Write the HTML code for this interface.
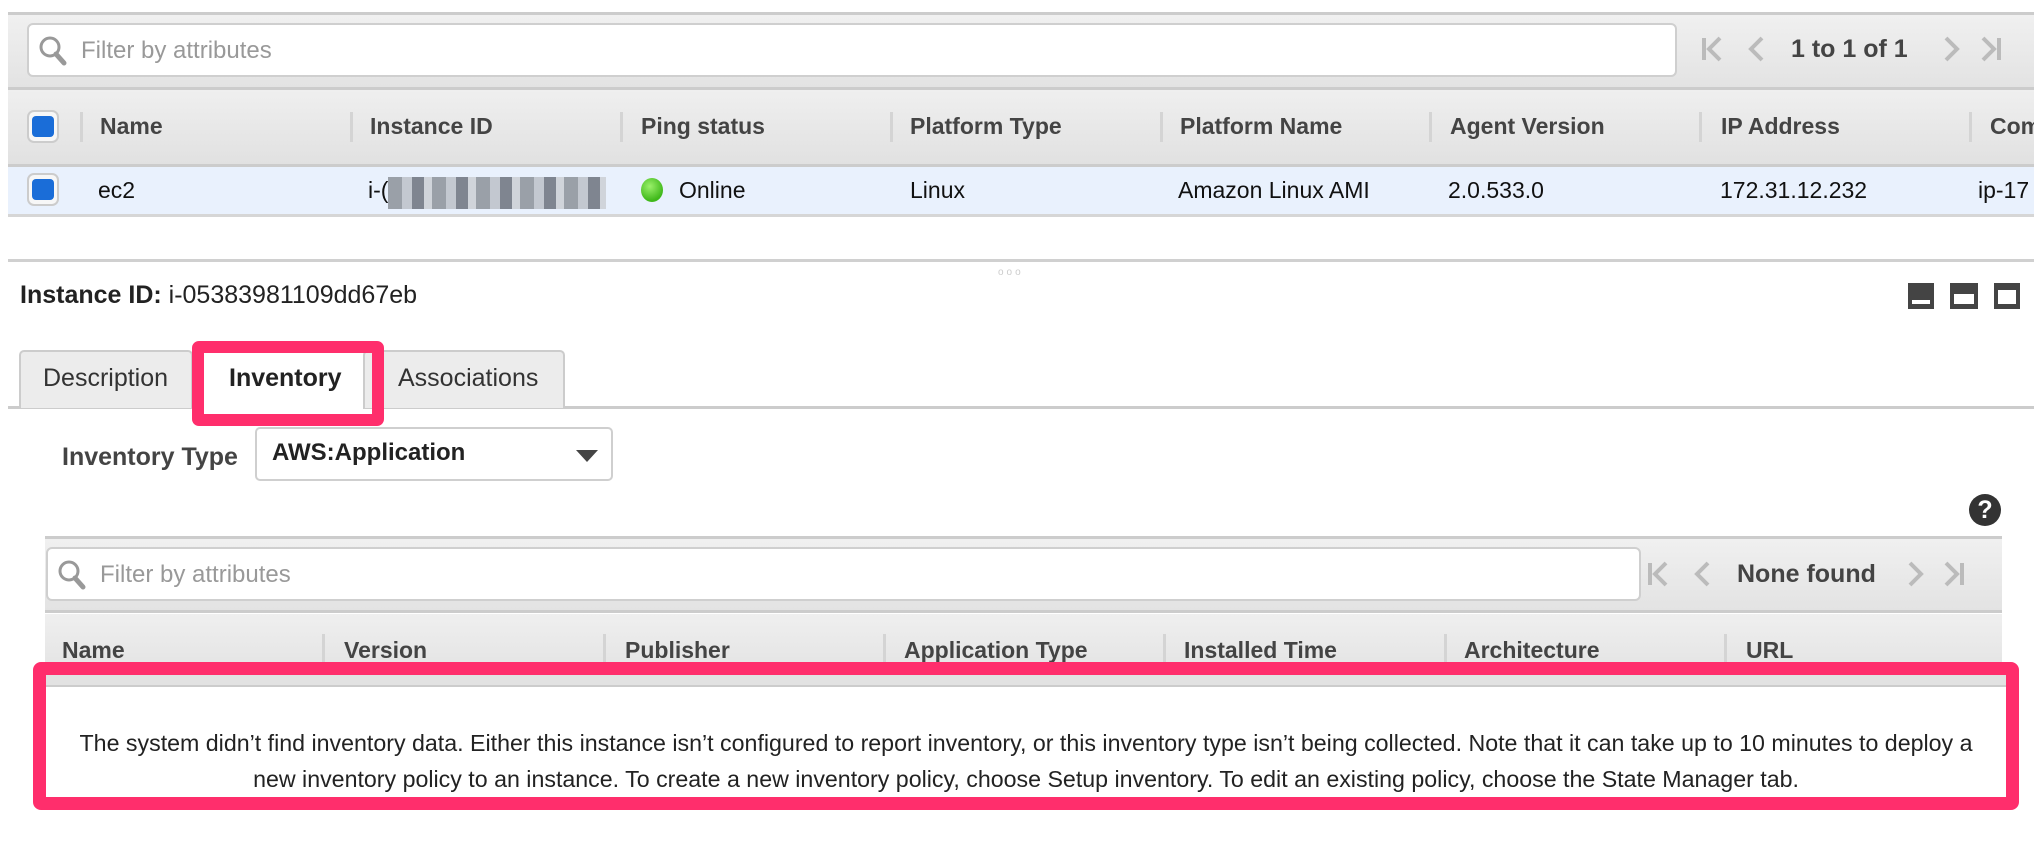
<!DOCTYPE html>
<html><head><meta charset="utf-8"><style>
*{box-sizing:border-box;margin:0;padding:0}
body{width:2034px;height:852px;position:relative;overflow:hidden;background:#fff;font-family:"Liberation Sans",Arial,sans-serif;color:#000}
.a{position:absolute}
.tb{background:linear-gradient(#f0f0f0,#e3e3e3);border-top:3px solid #ccc;border-bottom:3px solid #ccc}
.hd{background:linear-gradient(#efefef,#e1e1e1);border-bottom:3px solid #ccc}
.filter{background:#fff;border:2px solid #cfcfcf;border-radius:6px;color:#999;font-size:24px}
.b{font-weight:bold;color:#444;font-size:23px}
.sep{position:absolute;width:3px;background:#d4d4d4}
.t{font-size:23px;color:#111}
.cb{position:absolute;width:32px;height:33px;border:2px solid #ccc;border-radius:7px;background:#f7f7f7}
.cb:after{content:"";position:absolute;left:3px;top:4px;width:22px;height:21px;background:#1a6dd8;border-radius:4px}
</style></head><body>

<!-- top toolbar -->
<div class="a tb" style="left:8px;top:12px;width:2026px;height:78px"></div>
<div class="a filter" style="left:27px;top:23px;width:1650px;height:54px">
<svg class="a" style="left:9px;top:10px" width="30" height="32" viewBox="0 0 30 32"><circle cx="12" cy="12" r="9" fill="none" stroke="#999" stroke-width="3"/><path d="M18 19 L26 28" stroke="#999" stroke-width="5" stroke-linecap="round"/></svg>
<span class="a" style="left:52px;top:12px">Filter by attributes</span></div>
<svg class="a" style="left:1700px;top:36px" width="320" height="26" viewBox="0 0 320 26">
<g fill="none" stroke="#bbb" stroke-width="4">
<path d="M4 2V24M20 2L9 13L20 24"/>
<path d="M62 2L51 13L62 24"/>
<path d="M246 2L257 13L246 24"/>
<path d="M283 2L294 13L283 24M299 2V24"/>
</g></svg>
<div class="a b" style="left:1791px;top:35px;font-size:25px">1 to 1 of 1</div>

<!-- header row -->
<div class="a hd" style="left:8px;top:90px;width:2026px;height:77px"></div>
<div class="cb" style="left:27px;top:110px"></div>
<div class="sep" style="left:80px;top:112px;height:30px"></div>
<div class="sep" style="left:350px;top:112px;height:30px"></div>
<div class="sep" style="left:620px;top:112px;height:30px"></div>
<div class="sep" style="left:890px;top:112px;height:30px"></div>
<div class="sep" style="left:1160px;top:112px;height:30px"></div>
<div class="sep" style="left:1429px;top:112px;height:30px"></div>
<div class="sep" style="left:1699px;top:112px;height:30px"></div>
<div class="sep" style="left:1969px;top:112px;height:30px"></div>
<div class="a b" style="left:100px;top:113px">Name</div>
<div class="a b" style="left:370px;top:113px">Instance ID</div>
<div class="a b" style="left:641px;top:113px">Ping status</div>
<div class="a b" style="left:910px;top:113px">Platform Type</div>
<div class="a b" style="left:1180px;top:113px">Platform Name</div>
<div class="a b" style="left:1450px;top:113px">Agent Version</div>
<div class="a b" style="left:1721px;top:113px">IP Address</div>
<div class="a b" style="left:1990px;top:113px">Com</div>

<!-- data row -->
<div class="a" style="left:8px;top:167px;width:2026px;height:50px;background:#e9f1fd;border-bottom:3px solid #d6d6d6"></div>
<div class="cb" style="left:27px;top:173px"></div>
<div class="a t" style="left:98px;top:177px">ec2</div>
<div class="a t" style="left:368px;top:177px">i-(</div>
<div class="a" style="left:388px;top:177px;width:218px;height:32px;background:repeating-linear-gradient(90deg,#9aa0a8 0 14px,#c3c8d0 14px 24px,#7f8590 24px 36px,#d0d4da 36px 44px)"></div>
<div class="a" style="left:641px;top:178px;width:22px;height:24px;border-radius:50%;background:radial-gradient(circle at 40% 35%,#9af06a,#3fb81a 70%)"></div>
<div class="a t" style="left:679px;top:177px">Online</div>
<div class="a t" style="left:910px;top:177px">Linux</div>
<div class="a t" style="left:1178px;top:177px">Amazon Linux AMI</div>
<div class="a t" style="left:1448px;top:177px">2.0.533.0</div>
<div class="a t" style="left:1720px;top:177px">172.31.12.232</div>
<div class="a t" style="left:1978px;top:177px">ip-17</div>

<!-- divider -->
<div class="a" style="left:8px;top:259px;width:2026px;height:3px;background:#d0d0d0"></div>
<div class="a" style="left:998px;top:267px;color:#ccc;font-size:10px;letter-spacing:3px">ooo</div>

<div class="a" style="left:20px;top:281px;font-size:25px;color:#222"><b>Instance ID:</b> i-05383981109dd67eb</div>
<div class="a" style="left:1908px;top:283px;width:26px;height:26px;background:#444"><div class="a" style="left:4px;top:17px;width:18px;height:4px;background:#fff"></div></div>
<div class="a" style="left:1950px;top:283px;width:28px;height:26px;background:#444"><div class="a" style="left:4px;top:11px;width:20px;height:10px;background:#fff"></div></div>
<div class="a" style="left:1994px;top:283px;width:26px;height:26px;background:#444"><div class="a" style="left:4px;top:7px;width:18px;height:14px;background:#fff"></div></div>

<!-- tabs -->
<div class="a" style="left:8px;top:406px;width:2026px;height:3px;background:#ccc"></div>
<div class="a" style="left:19px;top:350px;width:174px;height:58px;background:#ececec;border:2px solid #ccc;border-bottom:none;border-radius:5px 5px 0 0"></div>
<div class="a" style="left:43px;top:364px;font-size:25px;color:#333">Description</div>
<div class="a" style="left:363px;top:350px;width:202px;height:58px;background:#ececec;border:2px solid #ccc;border-bottom:none;border-radius:5px 5px 0 0"></div>
<div class="a" style="left:398px;top:364px;font-size:25px;color:#333">Associations</div>
<div class="a" style="left:193px;top:350px;width:170px;height:60px;background:#fff"></div>
<div class="a" style="left:229px;top:364px;font-size:25px;font-weight:bold;color:#222">Inventory</div>
<div class="a" style="left:192px;top:341px;width:192px;height:85px;border:12px solid #ff2e6c;border-radius:7px"></div>

<!-- inventory type -->
<div class="a b" style="left:62px;top:443px;font-size:25px">Inventory Type</div>
<div class="a" style="left:255px;top:427px;width:358px;height:54px;border:2px solid #cfcfcf;border-radius:5px;background:#fff"></div>
<div class="a b" style="left:272px;top:439px;color:#222;font-size:24px">AWS:Application</div>
<svg class="a" style="left:576px;top:450px" width="22" height="12"><path d="M0 0H22L11 12Z" fill="#444"/></svg>

<div class="a" style="left:1969px;top:494px;width:32px;height:32px;border-radius:50%;background:#333;color:#fff;font-weight:bold;font-size:25px;text-align:center;line-height:32px">?</div>

<!-- inner table -->
<div class="a tb" style="left:45px;top:536px;width:1957px;height:77px"></div>
<div class="a filter" style="left:46px;top:547px;width:1595px;height:54px">
<svg class="a" style="left:9px;top:10px" width="30" height="32" viewBox="0 0 30 32"><circle cx="12" cy="12" r="9" fill="none" stroke="#999" stroke-width="3"/><path d="M18 19 L26 28" stroke="#999" stroke-width="5" stroke-linecap="round"/></svg>
<span class="a" style="left:52px;top:12px">Filter by attributes</span></div>
<svg class="a" style="left:1646px;top:561px" width="320" height="26" viewBox="0 0 320 26">
<g fill="none" stroke="#bbb" stroke-width="4">
<path d="M4 2V24M20 2L9 13L20 24"/>
<path d="M62 2L51 13L62 24"/>
<path d="M264 2L275 13L264 24"/>
<path d="M300 2L311 13L300 24M316 2V24"/>
</g></svg>
<div class="a b" style="left:1737px;top:560px;font-size:25px">None found</div>

<div class="a hd" style="left:45px;top:614px;width:1957px;height:75px"></div>
<div class="sep" style="left:322px;top:634px;height:30px"></div>
<div class="sep" style="left:603px;top:634px;height:30px"></div>
<div class="sep" style="left:883px;top:634px;height:30px"></div>
<div class="sep" style="left:1163px;top:634px;height:30px"></div>
<div class="sep" style="left:1444px;top:634px;height:30px"></div>
<div class="sep" style="left:1724px;top:634px;height:30px"></div>
<div class="a b" style="left:62px;top:637px">Name</div>
<div class="a b" style="left:344px;top:637px">Version</div>
<div class="a b" style="left:625px;top:637px">Publisher</div>
<div class="a b" style="left:904px;top:637px">Application Type</div>
<div class="a b" style="left:1184px;top:637px">Installed Time</div>
<div class="a b" style="left:1464px;top:637px">Architecture</div>
<div class="a b" style="left:1746px;top:637px">URL</div>

<div class="a" style="left:33px;top:662px;width:1986px;height:148px;border:13px solid #ff2e6c;border-radius:8px;background:#fff"></div>
<div class="a" style="left:46px;top:675px;width:1960px;height:12px;background:#e2e2e2;border-bottom:2px solid #ccc"></div>
<div class="a" style="left:46px;top:725px;width:1960px;text-align:center;font-size:23.2px;line-height:36px;color:#222;white-space:nowrap">The system didn’t find inventory data. Either this instance isn’t configured to report inventory, or this inventory type isn’t being collected. Note that it can take up to 10 minutes to deploy a<br>new inventory policy to an instance. To create a new inventory policy, choose Setup inventory. To edit an existing policy, choose the State Manager tab.</div>
</body></html>
